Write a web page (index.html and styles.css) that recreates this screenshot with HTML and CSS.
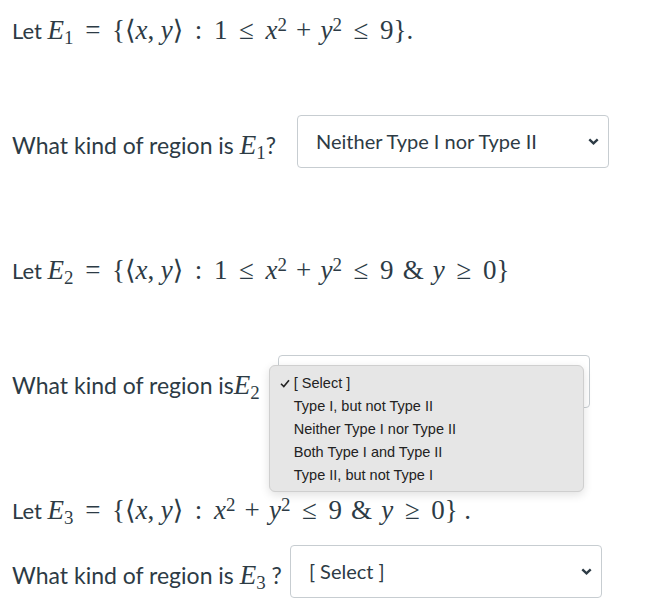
FILE: index.html
```html
<!DOCTYPE html>
<html>

<head>
    <link rel="stylesheet" href="styles.css">
</head>

<body>
    <div class="quiz">
        <div class="row let">
            Let&nbsp;<span class="m"><span class="mi">E</span><sub>1</sub><span class="rel">=</span>{⟨<span class="mi">x</span>,<span class="sp"></span><span class="mi">y</span>⟩<span class="rel">:</span>1<span class="rel">≤</span><span class="mi">x</span><sup>2</sup><span class="bin">+</span><span class="mi">y</span><sup>2</sup><span class="rel">≤</span>9}.</span>
        </div>

        <div class="row question q1">
            <span class="label">What kind of region is <span class="m"><span class="mi">E</span><sub>1</sub></span>?</span>
            <div class="select">
                <span>Neither Type I nor Type II</span>
                <svg class="chevron" width="11" height="7" viewBox="0 0 11 7">
                    <path d="M1.3 1.3 L5.5 5.3 L9.7 1.3" fill="none" stroke="#2d3b45" stroke-width="2.4" />
                </svg>
            </div>
        </div>

        <div class="row let gap-big">
            Let&nbsp;<span class="m"><span class="mi">E</span><sub>2</sub><span class="rel">=</span>{⟨<span class="mi">x</span>,<span class="sp"></span><span class="mi">y</span>⟩<span class="rel">:</span>1<span class="rel">≤</span><span class="mi">x</span><sup>2</sup><span class="bin">+</span><span class="mi">y</span><sup>2</sup><span class="rel">≤</span>9<span class="bin">&amp;</span><span class="mi">y</span><span class="rel">≥</span>0}</span>
        </div>

        <div class="row question q2">
            <span class="label">What kind of region is<span class="m"><span class="mi">E</span><sub>2</sub></span></span>
            <div class="select-wrap">
                <div class="select"></div>
                <div class="menu">
                    <div class="menu-item">
                        <svg class="check" width="10" height="9" viewBox="0 0 10 9">
                            <path d="M1 4.8 L3.8 7.6 L9 1.2" fill="none" stroke="#222" stroke-width="1.6" />
                        </svg>
                        [ Select ]
                    </div>
                    <div class="menu-item">Type I, but not Type II</div>
                    <div class="menu-item">Neither Type I nor Type II</div>
                    <div class="menu-item">Both Type I and Type II</div>
                    <div class="menu-item">Type II, but not Type I</div>
                </div>
            </div>
        </div>

        <div class="row let gap-big">
            Let&nbsp;<span class="m"><span class="mi">E</span><sub>3</sub><span class="rel">=</span>{⟨<span class="mi">x</span>,<span class="sp"></span><span class="mi">y</span>⟩<span class="rel">:</span><span class="mi">x</span><sup>2</sup><span class="bin">+</span><span class="mi">y</span><sup>2</sup><span class="rel">≤</span>9<span class="bin">&amp;</span><span class="mi">y</span><span class="rel">≥</span>0}<span class="sp"></span>.</span>
        </div>

        <div class="row question q3">
            <span class="label">What kind of region is <span class="m"><span class="mi">E</span><sub>3</sub></span> ?</span>
            <div class="select">
                <span>[ Select ]</span>
                <svg class="chevron" width="11" height="7" viewBox="0 0 11 7">
                    <path d="M1.3 1.3 L5.5 5.3 L9.7 1.3" fill="none" stroke="#2d3b45" stroke-width="2.4" />
                </svg>
            </div>
        </div>
    </div>
</body>

</html>
```

FILE: styles.css
```css
* {
    box-sizing: border-box;
}

html,
body {
    margin: 0;
    padding: 0;
    background: #fff;
}

.quiz {
    padding: 15px 12px 0 12px;
    font-family: Lato, "Liberation Sans", sans-serif;
    font-size: 22px;
    color: #2d3b45;
    display: flex;
    flex-direction: column;
}

.row {
    display: flex;
    align-items: center;
    white-space: nowrap;
}

.let {
    height: 30px;
}

.gap-big {
    margin-top: 87px;
}

.question {
    margin-top: 70px;
    font-size: 23px;
}

.label {
    padding-top: 7px;
}

.q1 .select {
    margin-left: 21px;
}

.q2 .select-wrap {
    margin-left: 18px;
}

.q3 {
    margin-top: 20px;
}

.q3 .select {
    margin-left: 8px;
}

/* math */
.m {
    font-family: "Liberation Serif", "DejaVu Serif", serif;
    font-size: 27px;
    color: #2d3b45;
}

.mi {
    font-style: italic;
}

.m sub,
.m sup {
    font-size: 0.7em;
    line-height: 0;
}

.m sub {
    vertical-align: -0.25em;
}

.m sup {
    vertical-align: 0.45em;
}

.rel {
    margin: 0 0.43em;
}

.bin {
    margin: 0 0.34em;
}

.sp {
    display: inline-block;
    width: 0.24em;
}

/* selects */
.select {
    width: 312px;
    height: 53px;
    border: 1px solid #c7cdd1;
    border-radius: 4px;
    background: #fff;
    display: flex;
    align-items: center;
    justify-content: space-between;
    padding: 0 9px 0 18px;
    font-size: 20px;
}

.select span {
    margin-top: -2px;
}

.chevron {
    margin-top: -1px;
}

.select-wrap {
    position: relative;
}

.menu {
    position: absolute;
    left: -9px;
    top: 10px;
    width: 315px;
    padding: 6px 0 4px 0;
    background: #e6e6e6;
    border: 1px solid #cfcfcf;
    border-radius: 6px;
    box-shadow: 0 3px 10px rgba(0, 0, 0, 0.12);
    font-family: "Liberation Sans", Arial, sans-serif;
    font-size: 14.5px;
    color: #222;
}

.menu-item {
    height: 23px;
    line-height: 23px;
    padding-left: 24px;
    position: relative;
}

.check {
    position: absolute;
    left: 10px;
    top: 7px;
}
```
